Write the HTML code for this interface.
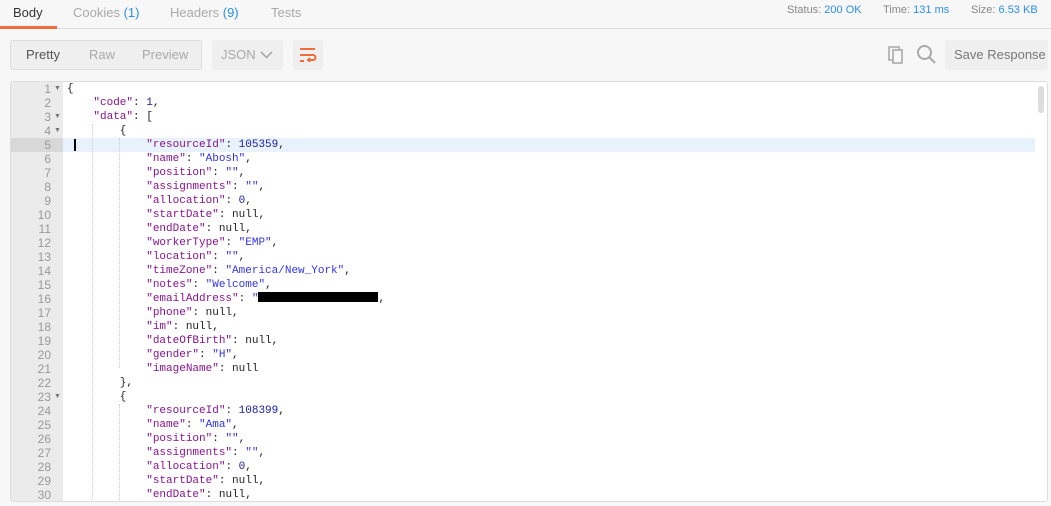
<!DOCTYPE html>
<html><head><meta charset="utf-8"><style>
*{margin:0;padding:0;box-sizing:border-box}
body{width:1051px;height:506px;background:#f7f7f7;font-family:"Liberation Sans",sans-serif;position:relative;overflow:hidden;color:#333}
.tabs{position:absolute;left:0;top:0;width:1051px;height:29px;border-bottom:1px solid #dcdcdc}
.tab{position:absolute;top:5px;font-size:13px;color:#aaa}
.tab b{font-weight:normal;color:#2a8ff0}
.ul{position:absolute;left:0;top:26px;width:57px;height:3px;background:#f26b3a}
.st{position:absolute;top:4px;font-size:11px;color:#888}
.st b{font-weight:normal;color:#2a8ff0}
.btn{position:absolute;top:40px;height:30px;background:#efefef;border-radius:3px;font-size:13px;color:#aaa;line-height:30px}
.ed{position:absolute;left:10px;top:81px;width:1038px;height:421px;background:#fff;border:1px solid #ddd;border-radius:3px;overflow:hidden}
.gut{position:absolute;left:0;top:0;width:52px;height:100%;background:#ebebeb}
.ln{position:absolute;left:0;width:40px;text-align:right;font:12px/14px "Liberation Sans",sans-serif;color:#999}
.ar{position:absolute;left:43px;font-size:7px;line-height:14px;color:#777}
.code{position:absolute;left:56px;top:0;font:11px/14px "Liberation Mono",monospace;color:#222}
.code div{height:14px;white-space:pre}
.k{color:#881391}.s{color:#3333f5}.n{color:#1a1aa6}
.hl{position:absolute;left:52px;top:56px;width:972px;height:14px;background:#e8f2fc}
.hlg{position:absolute;left:0;top:56px;width:52px;height:14px;background:#d8d8d8}
.guide{position:absolute;top:42px;width:0;border-left:1px dotted #ccc}
</style></head><body>
<div class="tabs">
<div class="tab" style="left:13px;color:#333">Body</div>
<div class="tab" style="left:73px">Cookies <b>(1)</b></div>
<div class="tab" style="left:170px">Headers <b>(9)</b></div>
<div class="tab" style="left:271px">Tests</div>
<div class="ul"></div>
<div class="st" style="left:787px">Status: <b>200 OK</b></div>
<div class="st" style="left:883px">Time: <b>131 ms</b></div>
<div class="st" style="left:971px">Size: <b>6.53 KB</b></div>
</div>
<div class="btn" style="left:10px;width:192px;border:1px solid #ddd;line-height:28px">
<span style="position:absolute;left:15px;color:#555">Pretty</span><span style="position:absolute;left:78px">Raw</span><span style="position:absolute;left:131px">Preview</span></div>
<div class="btn" style="left:212px;width:71px"><span style="position:absolute;left:9px">JSON</span>
<svg style="position:absolute;left:48px;top:11px" width="13" height="8"><path d="M1 1l5.5 5.5L12 1" stroke="#aaa" stroke-width="1.6" fill="none"/></svg></div>
<div class="btn" style="left:293px;width:30px">
<svg style="position:absolute;left:6px;top:8px" width="18" height="14"><g stroke="#f26b3a" stroke-width="2" fill="none"><path d="M1 1h15"/><path d="M1 7h13a2.5 2.5 0 0 1 0 5H9"/><path d="M11 10l-2 2 2 2"/><path d="M1 13h4"/></g></svg></div>
<svg style="position:absolute;left:887px;top:45px" width="18" height="20"><g stroke="#aaa" stroke-width="1.6" fill="none"><path d="M6 15H2V2h10v3"/><rect x="6" y="5" width="9" height="13"/></g></svg>
<svg style="position:absolute;left:916px;top:44px" width="21" height="21"><g stroke="#aaa" stroke-width="2" fill="none"><circle cx="8.5" cy="8.5" r="6.5"/><path d="M13 13l6 6"/></g></svg>
<div class="btn" style="left:945px;width:103px;color:#777"><span style="position:absolute;left:9px">Save Response</span></div>
<div class="ed">
<div class="gut"></div><div class="hlg"></div><div class="hl"></div>
<div style="position:absolute;left:63px;top:57px;width:2px;height:12px;background:#000"></div>
<div style="position:absolute;left:1027px;top:4px;width:6px;height:27px;background:#ddd;border-radius:3px"></div>
<div class="guide" style="left:81px;height:380px"></div>
<div class="guide" style="left:108px;top:56px;height:230px"></div>
<div class="guide" style="left:108px;top:322px;height:100px"></div>
<div class="code"><div>{</div><div>    <span class="k">"code"</span>: <span class="n">1</span>,</div><div>    <span class="k">"data"</span>: [</div><div>        {</div><div>            <span class="k">"resourceId"</span>: <span class="n">105359</span>,</div><div>            <span class="k">"name"</span>: <span class="s">"Abosh"</span>,</div><div>            <span class="k">"position"</span>: <span class="s">""</span>,</div><div>            <span class="k">"assignments"</span>: <span class="s">""</span>,</div><div>            <span class="k">"allocation"</span>: <span class="n">0</span>,</div><div>            <span class="k">"startDate"</span>: null,</div><div>            <span class="k">"endDate"</span>: null,</div><div>            <span class="k">"workerType"</span>: <span class="s">"EMP"</span>,</div><div>            <span class="k">"location"</span>: <span class="s">""</span>,</div><div>            <span class="k">"timeZone"</span>: <span class="s">"America/New_York"</span>,</div><div>            <span class="k">"notes"</span>: <span class="s">"Welcome"</span>,</div><div>            <span class="k">"emailAddress"</span>: <span class="s">"</span><span style="display:inline-block;width:120px;height:10px;background:#000;vertical-align:-1px"></span>,</div><div>            <span class="k">"phone"</span>: null,</div><div>            <span class="k">"im"</span>: null,</div><div>            <span class="k">"dateOfBirth"</span>: null,</div><div>            <span class="k">"gender"</span>: <span class="s">"H"</span>,</div><div>            <span class="k">"imageName"</span>: null</div><div>        },</div><div>        {</div><div>            <span class="k">"resourceId"</span>: <span class="n">108399</span>,</div><div>            <span class="k">"name"</span>: <span class="s">"Ama"</span>,</div><div>            <span class="k">"position"</span>: <span class="s">""</span>,</div><div>            <span class="k">"assignments"</span>: <span class="s">""</span>,</div><div>            <span class="k">"allocation"</span>: <span class="n">0</span>,</div><div>            <span class="k">"startDate"</span>: null,</div><div>            <span class="k">"endDate"</span>: null,</div></div>
<div class="ln" style="top:0">1<br>2<br>3<br>4<br>5<br>6<br>7<br>8<br>9<br>10<br>11<br>12<br>13<br>14<br>15<br>16<br>17<br>18<br>19<br>20<br>21<br>22<br>23<br>24<br>25<br>26<br>27<br>28<br>29<br>30</div>
<div class="ar" style="top:0">▼</div><div class="ar" style="top:28px">▼</div><div class="ar" style="top:42px">▼</div><div class="ar" style="top:308px">▼</div>
</div>
</body></html>
